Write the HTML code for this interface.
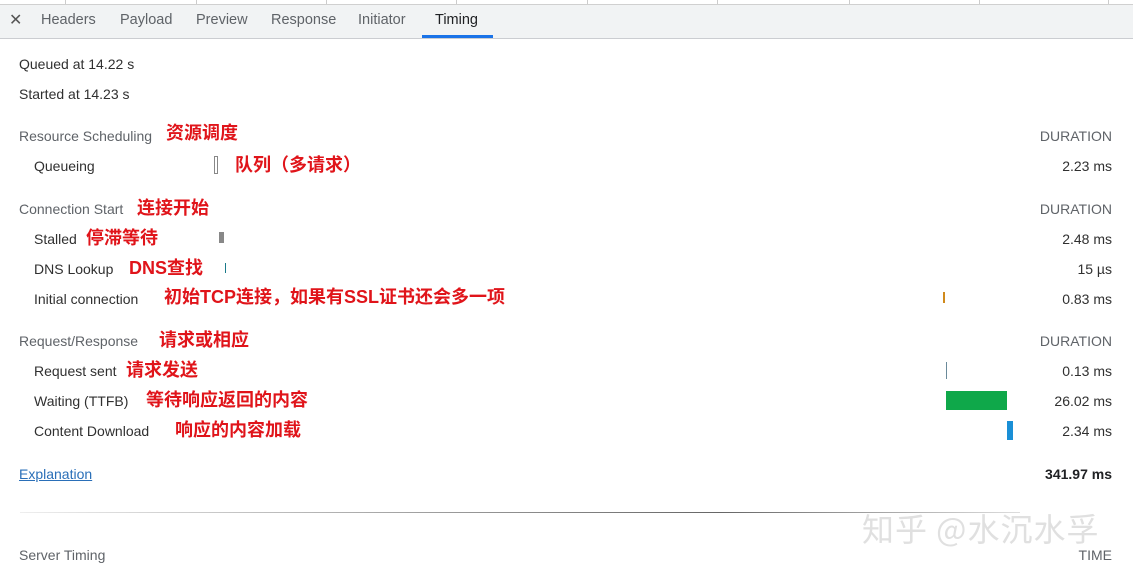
<!DOCTYPE html>
<html><head><meta charset="utf-8"><style>
body{margin:0;width:1133px;height:573px;overflow:hidden;background:#fff;font-family:"Liberation Sans","Noto Sans CJK SC",sans-serif;font-size:14px;color:#303030;position:relative}
.a{position:absolute;white-space:nowrap;line-height:18px}
.g{color:#5f6368}
.r{color:#e0141a;font-weight:bold;font-size:18px;line-height:20px;font-family:"Liberation Sans","Noto Sans CJK SC",sans-serif}
.rt{right:21px;text-align:right}
.tab{position:absolute;top:12px;color:#5f6368;font-size:14.5px}
.v{position:absolute;top:0;height:4px;width:1px;background:#ccc}
.b{position:absolute}
</style></head><body>
<div class="v" style="left:65px"></div><div class="v" style="left:196px"></div><div class="v" style="left:326px"></div><div class="v" style="left:456px"></div><div class="v" style="left:587px"></div><div class="v" style="left:717px"></div><div class="v" style="left:849px"></div><div class="v" style="left:979px"></div><div class="v" style="left:1108px"></div>
<div style="position:absolute;left:0;top:4px;width:1133px;height:33px;background:#f1f3f4;border-top:1px solid #d0d0d0;border-bottom:1px solid #cbcdd1"></div>
<div class="tab" style="left:9px;top:10px;color:#555;font-size:16px">✕</div>
<div class="tab" style="left:41px">Headers</div>
<div class="tab" style="left:120px">Payload</div>
<div class="tab" style="left:196px">Preview</div>
<div class="tab" style="left:271px">Response</div>
<div class="tab" style="left:358px">Initiator</div>
<div class="tab" style="left:435px;color:#202124">Timing</div>
<div style="position:absolute;left:422px;top:35px;width:71px;height:3px;background:#1a73e8"></div>

<div class="a" style="left:19px;top:55px">Queued at 14.22 s</div>
<div class="a" style="left:19px;top:85px">Started at 14.23 s</div>

<div class="a g" style="left:19px;top:127px">Resource Scheduling</div>
<div class="a r" style="left:166px;top:123px">资源调度</div>
<div class="a g rt" style="top:127px">DURATION</div>
<div class="a" style="left:34px;top:157px">Queueing</div>
<div class="b" style="left:214px;top:156px;width:4px;height:18px;border:1px solid #888;box-sizing:border-box"></div>
<div class="a r" style="left:235px;top:155px">队列（多请求）</div>
<div class="a rt" style="top:157px">2.23 ms</div>

<div class="a g" style="left:19px;top:200px">Connection Start</div>
<div class="a r" style="left:137px;top:198px">连接开始</div>
<div class="a g rt" style="top:200px">DURATION</div>
<div class="a" style="left:34px;top:230px">Stalled</div>
<div class="a r" style="left:86px;top:228px">停滞等待</div>
<div class="b" style="left:219px;top:232px;width:5px;height:11px;background:#888"></div>
<div class="a rt" style="top:230px">2.48 ms</div>
<div class="a" style="left:34px;top:260px">DNS Lookup</div>
<div class="a r" style="left:129px;top:258px">DNS查找</div>
<div class="b" style="left:225px;top:263px;width:1px;height:10px;background:#1a7a8a"></div>
<div class="a rt" style="top:260px">15 µs</div>
<div class="a" style="left:34px;top:290px">Initial connection</div>
<div class="a r" style="left:164px;top:287px">初始TCP连接，如果有SSL证书还会多一项</div>
<div class="b" style="left:943px;top:292px;width:2px;height:11px;background:#d08a1c"></div>
<div class="a rt" style="top:290px">0.83 ms</div>

<div class="a g" style="left:19px;top:332px">Request/Response</div>
<div class="a r" style="left:159px;top:330px">请求或相应</div>
<div class="a g rt" style="top:332px">DURATION</div>
<div class="a" style="left:34px;top:362px">Request sent</div>
<div class="a r" style="left:126px;top:360px">请求发送</div>
<div class="b" style="left:946px;top:362px;width:1px;height:17px;background:#6a8a9a"></div>
<div class="a rt" style="top:362px">0.13 ms</div>
<div class="a" style="left:34px;top:392px">Waiting (TTFB)</div>
<div class="a r" style="left:146px;top:390px">等待响应返回的内容</div>
<div class="b" style="left:946px;top:391px;width:61px;height:19px;background:#0fa84a"></div>
<div class="a rt" style="top:392px">26.02 ms</div>
<div class="a" style="left:34px;top:422px">Content Download</div>
<div class="a r" style="left:175px;top:420px">响应的内容加载</div>
<div class="b" style="left:1007px;top:421px;width:6px;height:19px;background:#1a8fd6"></div>
<div class="a rt" style="top:422px">2.34 ms</div>

<div class="a" style="left:19px;top:465px;color:#2a6fb8;text-decoration:underline">Explanation</div>
<div class="a rt" style="top:465px;font-weight:bold;color:#202124">341.97 ms</div>

<div class="b" style="left:20px;top:512px;width:1000px;height:1px;background:linear-gradient(to right,#eee,#666 70%,#ddd)"></div>
<div class="a" style="left:862px;top:508px;font-size:32px;line-height:40px;color:#e0e0e0;font-family:'Noto Sans CJK SC',sans-serif;letter-spacing:1px">知乎 @水沉水孚</div>
<div class="a g" style="left:19px;top:546px">Server Timing</div>
<div class="a g rt" style="top:546px">TIME</div>
</body></html>
